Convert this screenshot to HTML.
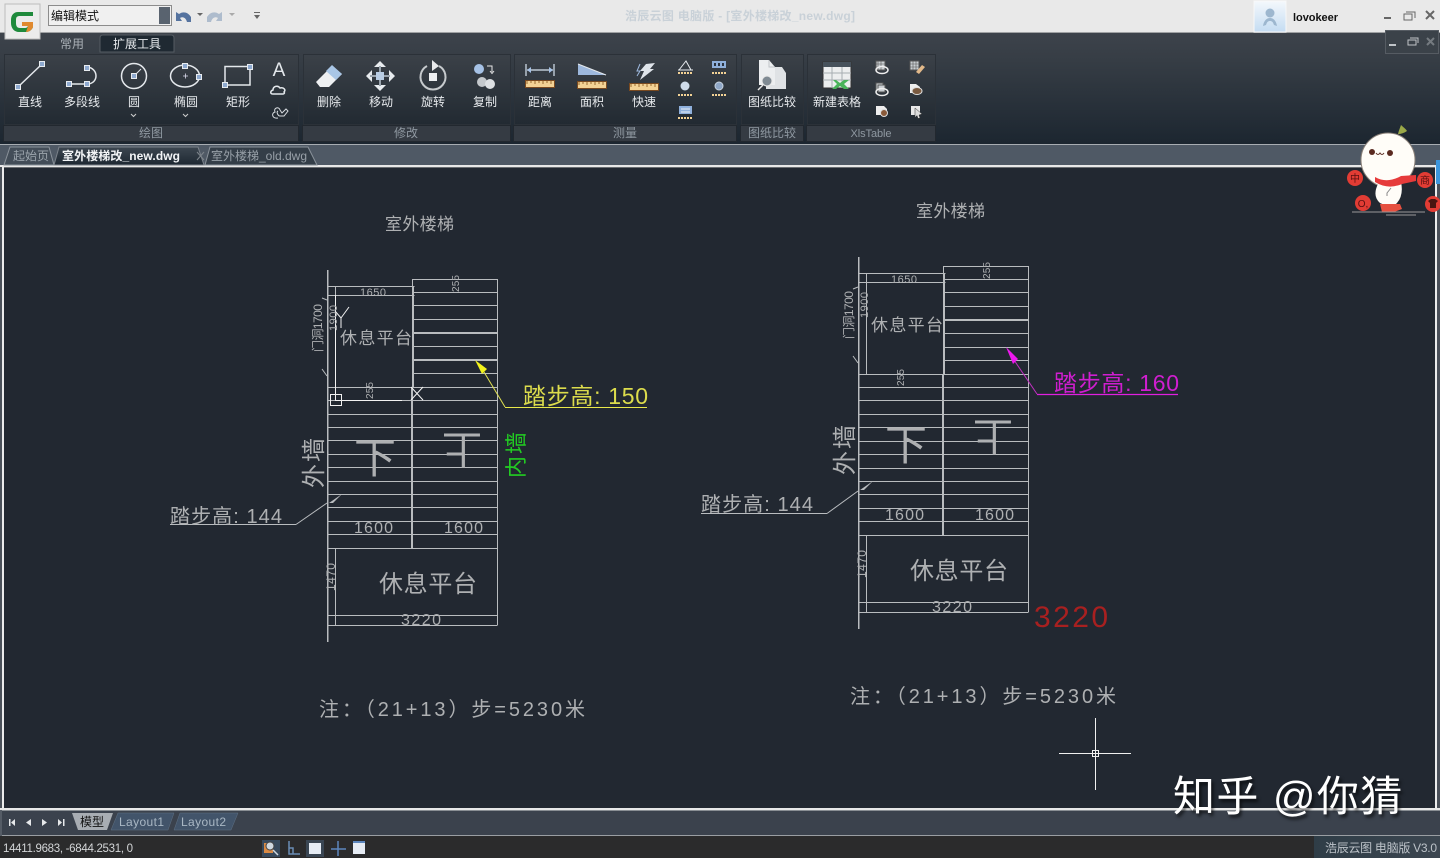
<!DOCTYPE html>
<html><head><meta charset="utf-8"><style>
html,body{margin:0;padding:0;width:1440px;height:858px;overflow:hidden;background:#222831}
svg{display:block;position:absolute;left:0;top:0}
text{font-family:"Liberation Sans","Noto Sans CJK SC",sans-serif}
.rl{font-size:12px;fill:#e6e9ec;text-anchor:middle}
.gl{font-size:12px;fill:#8f98a1;text-anchor:middle}
.d{fill:#aeb0b2;font-family:"Liberation Sans","Noto Sans CJK SC",sans-serif}
.wm{position:absolute;left:1173px;top:769px;font:42px/56px "Liberation Sans","Noto Sans CJK SC",sans-serif;color:#fff;text-shadow:2px 3px 3px rgba(0,0,0,.65);white-space:nowrap;letter-spacing:1.4px}
</style></head><body>
<svg width="1440" height="858" viewBox="0 0 1440 858" xmlns="http://www.w3.org/2000/svg">
<defs>
<linearGradient id="rib" x1="0" y1="0" x2="0" y2="1"><stop offset="0" stop-color="#3d434b"/><stop offset=".25" stop-color="#363d45"/><stop offset="1" stop-color="#1c2630"/></linearGradient>
<linearGradient id="grp" x1="0" y1="0" x2="0" y2="1"><stop offset="0" stop-color="#3b4148"/><stop offset="1" stop-color="#222a32"/></linearGradient>
<linearGradient id="usr" x1="0" y1="0" x2="0" y2="1"><stop offset="0" stop-color="#f4f8fc"/><stop offset="1" stop-color="#c4dcf2"/></linearGradient>
<linearGradient id="tabact" x1="0" y1="0" x2="0" y2="1"><stop offset="0" stop-color="#3c4650"/><stop offset="1" stop-color="#1e2832"/></linearGradient>
<linearGradient id="st" x1="0" y1="0" x2="1" y2="0"><stop offset="0" stop-color="#2f3d47"/><stop offset="1" stop-color="#3c4650"/></linearGradient>
</defs>

<!-- title bar -->
<rect width="1440" height="32" fill="#e9e9e9"/>
<rect y="32" width="1440" height="1" fill="#a0a2a4"/>
<!-- ribbon bg -->
<rect y="33" width="1440" height="111" fill="url(#rib)"/>
<rect y="144" width="1440" height="1" fill="#a8adb2"/>
<rect y="145" width="1440" height="20" fill="#4f5965"/>
<rect y="165" width="1440" height="2" fill="#e8e8e8"/>
<rect y="167" width="1440" height="1" fill="#6a6e72"/>

<!-- logo -->
<rect x="5" y="4" width="35" height="35" fill="#ececec" stroke="#bdbdbd"/>
<path d="M33 12H18c-4 0-7 3-7 8v3c0 5 3 9 8 9h7c3 0 6-2 7-5v-5H22v4h6c-1 2-2 2-4 2h-4c-3 0-4-2-4-5v-3c0-3 1-4 4-4h13z" fill="#1f8a3c"/>
<path d="M22 22h11v5c-1 3-4 5-7 5l2-6h-6z" fill="#e08a30"/>
<!-- combo -->
<rect x="48.500" y="5.500" width="123" height="20" fill="#f0f0f0" stroke="#8c8c8c"/>
<rect x="159" y="7" width="11" height="17" fill="#59636f"/>
<text x="51" y="20" font-size="12" fill="#111">编辑模式</text>
<!-- undo/redo -->
<path d="M176 12l3 2c4-3 9-2 12 3v5h-4c-1-4-4-6-7-4l2 3h-6z" fill="#55739f"/>
<path d="M197 13h6l-3 3z" fill="#666"/>
<path d="M222 12l-3 2c-4-3-9-2-12 3v5h4c1-4 4-6 7-4l-2 3h6z" fill="#aebccd"/>
<path d="M229 13h6l-3 3z" fill="#aaa"/>
<path d="M254 12h6v1h-6zM254 15h6l-3 4z" fill="#666"/>
<text x="625" y="20" font-size="12" font-weight="bold" fill="#c9d1d8" textLength="230">浩辰云图 电脑版 - [室外楼梯改_new.dwg]</text>
<!-- user -->
<rect x="1254" y="1" width="32" height="31" fill="url(#usr)" stroke="#f8f8f8"/>
<circle cx="1270" cy="13" r="4.500" fill="#9db7cf"/>
<path d="M1263 26c1-6 4-8 7-8s6 2 7 8l-3-1c-1-3-2-4-4-4s-3 1-4 4z" fill="#9db7cf"/>
<text x="1293" y="21" font-size="11" font-weight="bold" fill="#111" textLength="45">lovokeer</text>
<g stroke="#666" fill="none" stroke-width="1.500">
<path d="M1384 18h7" stroke-width="2"/>
<path d="M1406 12h9v6M1404 14h8v6h-8z" stroke-width="1"/>
<path d="M1426 11l8 8M1434 11l-8 8" stroke-width="2"/>
</g>
<!-- mdi controls -->
<rect x="1385.500" y="30.500" width="53" height="23" fill="#3b4249" stroke="#565c63"/>
<path d="M1389 45h7" stroke="#c0c4c8" stroke-width="2"/>
<g stroke="#c0c4c8" fill="none"><path d="M1410 38h8v5M1408 40h8v5h-8z"/></g>
<path d="M1427 38l7 7M1434 38l-7 7" stroke="#757b80" stroke-width="2"/>

<!-- ribbon tabs -->
<text x="72" y="48" class="gl" style="fill:#aab0b6">常用</text>
<path d="M100 52V38q0-3 3-3h68q3 0 3 3v14z" fill="#1f2932" stroke="#555c63"/>
<text x="137" y="48" class="rl">扩展工具</text>

<!-- ribbon groups -->
<g fill="url(#grp)" stroke="#2b3138">
<rect x="4.500" y="54.500" width="294" height="70"/>
<rect x="303.500" y="54.500" width="207" height="70"/>
<rect x="514.500" y="54.500" width="222" height="70"/>
<rect x="741.500" y="54.500" width="62" height="70"/>
<rect x="807.500" y="54.500" width="128" height="70"/>
</g>
<g fill="#353b43" stroke="#22282f">
<rect x="3.500" y="125.500" width="295" height="16"/>
<rect x="302.500" y="125.500" width="208" height="16"/>
<rect x="513.500" y="125.500" width="223" height="16"/>
<rect x="740.500" y="125.500" width="63" height="16"/>
<rect x="806.500" y="125.500" width="129" height="16"/>
</g>
<text x="151" y="137" class="gl">绘图</text>
<text x="406" y="137" class="gl">修改</text>
<text x="625" y="137" class="gl">测量</text>
<text x="772" y="137" class="gl">图纸比较</text>
<text x="871" y="137" class="gl" style="font-size:11px" textLength="41">XlsTable</text>

<!-- draw icons -->
<g stroke="#e4e8ec" fill="none" stroke-width="1.500">
<path d="M19 86L41 65"/>
<path d="M70 84H87M87 67c12 1 12 17 0 17"/>
<circle cx="134" cy="76" r="12.500"/><path d="M134 76l7-7" stroke-width="1"/>
<ellipse cx="185" cy="76" rx="14.500" ry="11"/>
<path d="M225 85V66.500H250V85H225" />
</g>
<g fill="#8ea9cf" stroke="#e8ecf0" stroke-width="1">
<rect x="15.500" y="84.500" width="5" height="5"/><rect x="39.500" y="61.500" width="5" height="5"/>
<rect x="66.500" y="81.500" width="5" height="5"/><rect x="84.500" y="81.500" width="5" height="5"/><rect x="84.500" y="65.500" width="5" height="5"/>
<rect x="131.500" y="73.500" width="5" height="5"/>
<rect x="182.500" y="63.500" width="5" height="5"/><rect x="196.500" y="74.500" width="5" height="5"/>
<rect x="222.500" y="82.500" width="5" height="5"/><rect x="247.500" y="64.500" width="5" height="5"/>
</g>
<path d="M183 76h5M185.500 73.500v5" stroke="#dde" stroke-width=".8"/>
<text x="279" y="76" font-size="19" fill="#e4e8ec" text-anchor="middle">A</text>
<path d="M273 94c-3 0-3-3 0-4 0-4 5-5 7-2 4-1 6 2 4 4 1 1 0 2-1 2z" fill="none" stroke="#e4e8ec" stroke-width="1.500"/>
<path d="M278 118c-6 1-7-5-3-6-2-4 4-6 5-2l2 3 4-4 2 2-4 5h-4c-2 0-4-4-2-5" fill="none" stroke="#d8dce0" stroke-width="1"/>
<text x="30" y="106" class="rl">直线</text>
<text x="82" y="106" class="rl">多段线</text>
<text x="134" y="106" class="rl">圆</text>
<text x="186" y="106" class="rl">椭圆</text>
<text x="238" y="106" class="rl">矩形</text>
<path d="M131 114l2.500 2.500L136 114M183 114l2.500 2.500L188 114" stroke="#ccc" fill="none"/>

<!-- modify icons -->
<path d="M316 82l16-16 10 8-13 13h-9z" fill="#eef0f2"/>
<path d="M332 65l10 9-6 6-10-9z" fill="#a9c6e6"/>
<g fill="#e8ecef">
<path d="M380 61l6 6h-12zM380 91l6-6h-12zM366 76l6-6v12zM395 76l-6-6v12z"/>
<path d="M379 66h2v20h-2zM370 75h20v2h-20z" fill="#9aa4ad"/>
</g>
<rect x="376" y="72" width="8" height="8" fill="#b9cde4"/>
<path d="M427 66a12.500 12.500 0 1 0 12 0" fill="none" stroke="#c6cacd" stroke-width="2"/>
<path d="M432 60l7 6-7 5z" fill="#e8eaec"/>
<rect x="429" y="73" width="8" height="8" fill="#eef0f2"/>
<circle cx="479" cy="69" r="5" fill="#a6c2e6"/>
<circle cx="482" cy="82" r="5" fill="#c4c8cc"/><circle cx="490" cy="84" r="5" fill="#dde0e3"/>
<path d="M487 66h5v6M490 71l2 2.500 2-2.500" stroke="#e8e8e8" fill="none"/>
<text x="329" y="106" class="rl">删除</text>
<text x="381" y="106" class="rl">移动</text>
<text x="433" y="106" class="rl">旋转</text>
<text x="485" y="106" class="rl">复制</text>

<!-- measure -->
<g fill="#f3d295" stroke="#7a4a20" stroke-width="1">
<rect x="525.500" y="80.500" width="29" height="7"/>
<rect x="577.500" y="81.500" width="29" height="7"/>
<rect x="629.500" y="83.500" width="29" height="7"/>
</g>
<path d="M527 81v3M531 81v2M535 81v3M539 81v2M543 81v3M547 81v2M551 81v3M579 82v3M583 82v2M587 82v3M591 82v2M595 82v3M599 82v2M603 82v3M631 84v3M635 84v2M639 84v3M643 84v2M647 84v3M651 84v2M655 84v3" stroke="#9a6a30" fill="none"/>
<path d="M526 64v12M554 64v12M527 70h26" stroke="#d8e4f0" fill="none" stroke-width="1.200"/>
<path d="M527 70l4-3v6zM553 70l-4-3v6z" fill="#a6c2e6"/>
<path d="M578 64v11h28z" fill="#9db8dd"/>
<path d="M578 64l28 11" stroke="#e4e8ec"/>
<path d="M646 64l9-1-5 6h4l-14 11 4-9h-4z" fill="#dfe4ea"/>
<path d="M640 64l-3 7h3l-3 5" stroke="#9db8dd" fill="none"/>
<!-- small measure -->
<g fill="none" stroke="#f3d295" stroke-width="2" stroke-dasharray="2 1">
<path d="M678 73h15M678 95h14M678 118h14M712 73h14M712 95h14"/>
</g>
<path d="M679 70l7-9 5 9z M678 70h15" fill="none" stroke="#e8ecf0"/>
<circle cx="685" cy="86" r="4.500" fill="#cfdbea"/>
<rect x="679" y="106" width="13" height="8" fill="#8fb0dc"/>
<path d="M681 109h9M681 112h9" stroke="#e8eef5"/>
<rect x="712" y="61" width="14" height="7" fill="#8fb0dc"/>
<path d="M714 63h2v3h-2zM718 63h2v3h-2zM722 63h2v3h-2z" fill="#2a3340"/>
<circle cx="719" cy="86" r="4" fill="#8fa7c7" stroke="#c9d4e0"/>
<text x="540" y="106" class="rl">距离</text>
<text x="592" y="106" class="rl">面积</text>
<text x="644" y="106" class="rl">快速</text>

<!-- compare -->
<path d="M775 67h7l4 6v16h-20v-5h9z" fill="#dfe2e5"/>
<path d="M759 60h10l6 7v18h-16z" fill="#eceef0"/>
<path d="M769 60v7h6" stroke="#c0c4c8" fill="none"/>
<circle cx="767" cy="81" r="5" fill="#7f8a93" stroke="#e8e8e8"/>
<path d="M763 85l-5 5" stroke="#e8e8e8" stroke-width="1.500"/>
<text x="772" y="106" class="rl">图纸比较</text>

<!-- table -->
<rect x="823" y="62" width="28" height="26" fill="#eceeef" stroke="#333"/>
<rect x="823" y="62" width="28" height="5" fill="#47525c"/>
<path d="M823 73h28M823 80h28M832 67v21M842 67v21" stroke="#a6adb2" fill="none"/>
<path d="M836 80l4 3 4-3h5l-5 4 5 5h-5l-4-3-4 3h-4l5-5-4-4z" fill="#49b35a"/>
<text x="837" y="106" class="rl">新建表格</text>
<!-- small table icons -->
<g>
<rect x="876" y="61" width="9" height="9" fill="#c9ced2" stroke="#555"/>
<path d="M878 61v9M881 61v9M876 64h9M876 67h9" stroke="#555" stroke-width=".6"/>
<ellipse cx="882" cy="70" rx="6" ry="3.500" fill="none" stroke="#eee" stroke-width="1.500"/>
<rect x="876" y="83" width="7" height="7" fill="#c9ced2" stroke="#555"/>
<rect x="878" y="85" width="7" height="7" fill="#c9ced2" stroke="#555"/>
<ellipse cx="882" cy="92" rx="6" ry="3.500" fill="none" stroke="#eee" stroke-width="1.500"/>
<path d="M876 106h8l3 3v6h-11z" fill="#eee"/><circle cx="884" cy="113" r="3.500" fill="#8a5a3a" stroke="#ddd"/>
<rect x="910" y="61" width="9" height="9" fill="#c9ced2" stroke="#555"/>
<path d="M913 61v9M916 61v9M910 64h9M910 67h9" stroke="#555" stroke-width=".6"/>
<path d="M916 72l6-7 3 2-6 7z" fill="#e2b98a"/>
<path d="M910 84h6l4 3v6h-10z" fill="#eee"/><ellipse cx="917" cy="91" rx="5" ry="3.500" fill="#7a5a40" stroke="#ddd"/>
<rect x="911" y="106" width="9" height="9" fill="#e8e8e8"/>
<path d="M915 108l7 6-3 1 1 3-2 .5-1-3-2 2z" fill="#ddd" stroke="#333" stroke-width=".5"/>
</g>

<!-- doc tabs -->
<path d="M4 165l6-18h39l5 18z" fill="#434d58" stroke="#8a929a"/>
<text x="13" y="160" font-size="12" fill="#9ba4ac" textLength="36">起始页</text>
<path d="M54 165l5-18h139l6 18z" fill="url(#tabact)" stroke="#7a8189"/>
<text x="62" y="160" font-size="12" font-weight="bold" fill="#f2f4f6" textLength="118">室外楼梯改_new.dwg</text>
<path d="M197 152l7 8M204 152l-7 8" stroke="#7e858c"/>
<path d="M205 165l5-18h98l9 18z" fill="#343e48" stroke="#8a929a"/>
<text x="211" y="160" font-size="12" fill="#98a0a8" textLength="96">室外楼梯_old.dwg</text>

<!-- canvas -->
<rect x="3" y="168" width="1434" height="640" fill="#222831"/>
<rect x="2" y="167" width="2" height="642" fill="#ececec"/>
<rect x="1435" y="167" width="2" height="642" fill="#ececec"/>
<rect x="1437" y="167" width="3" height="642" fill="#4a5059"/>
<rect x="0" y="167" width="2" height="642" fill="#4a5059"/>
<rect x="1436" y="160" width="4" height="24" fill="#3d97dd"/>

<!-- drawing lines -->
<g id="plan" stroke="#b9bcbf" stroke-width="1" fill="none" shape-rendering="crispEdges">
<path d="M327.500 270V642" stroke-width="1.500"/>
<path d="M327 286.500H414.500M327 295.500H414.500M335.500 286V387M413.500 286V387M412.500 279V548" />
<path d="M412 548V387" stroke-width="2"/>
<path d="M412 279.500H497.500M412 292.500H497.500M412 305.500H497.500M412 319.500H497.500M412 346.500H497.500M412 373.500H497.500"/>
<path d="M412 333H497.500M412 360H497.500" stroke-width="2"/>
<path d="M327 387.500H497.500M327 400.500H497.500M327 414.500H497.500M327 427.500H497.500M327 440.500H497.500M327 454.500H497.500M327 467.500H497.500M327 481.500H497.500M327 494.500H497.500M327 507.500H497.500M327 521.500H497.500M327 534.500H497.500M327 548.500H497.500"/>
<path d="M497.500 279V625M335.500 548V625M327 615.500H497.500M327 625.500H497.500"/>
</g>
<g stroke="#b9bcbf" fill="none">
<path d="M327 300l-5-2M327 376l-5-7"/>
<path d="M296 524.500L327 503"/>
<path d="M170 524.500H296"/>
</g>
<path d="M329 503l13-9-9 9z" fill="#b9bcbf"/>
<!-- right plan lines -->
<g stroke="#b9bcbf" stroke-width="1" fill="none" shape-rendering="crispEdges">
<path d="M858.500 257V629" stroke-width="1.500"/>
<path d="M858 273.500H945.500M858 282.500H945.500M866.500 273V374M944.500 273V374M943.500 266V535"/>
<path d="M943 535V374" stroke-width="2"/>
<path d="M943 266.500H1028.500M943 279.500H1028.500M943 292.500H1028.500M943 306.500H1028.500M943 333.500H1028.500M943 347.500H1028.500M943 360.500H1028.500"/>
<path d="M943 320H1028.500" stroke-width="2"/>
<path d="M858 374.500H1028.500M858 387.500H1028.500M858 400.500H1028.500M858 414.500H1028.500M858 427.500H1028.500M858 441.500H1028.500M858 454.500H1028.500M858 468.500H1028.500M858 481.500H1028.500M858 494.500H1028.500M858 508.500H1028.500M858 521.500H1028.500M858 535.500H1028.500"/>
<path d="M1028.500 266V612M866.500 535V612M858 602.500H1028.500M858 612.500H1028.500"/>
</g>
<g stroke="#b9bcbf" fill="none">
<path d="M858 287l-5 2M858 363l-5-7"/>
<path d="M827 513.500L858 491"/>
<path d="M701 513.500H827"/>
</g>
<path d="M860 490l13-9-9 9z" fill="#b9bcbf"/>

<!-- UCS white lines left -->
<g stroke="#f2f2f2" fill="none">
<path d="M335.500 295V400.500H402"/>
<path d="M335 311l6 7 8-11M341 318v10"/>
<rect x="330.500" y="394.500" width="11" height="11"/>
<path d="M411 387l12 13M423 387l-12 13"/>
</g>
<!-- yellow leader -->
<path d="M505 407.500H647" stroke="#e8e84a"/>
<path d="M505 407L484 372" stroke="#e0e050"/>
<path d="M475 360l12 9-5 5z" fill="#f2f21c"/>
<!-- magenta leader -->
<path d="M1037 394.500H1178" stroke="#e020e0" stroke-width="1.200"/>
<path d="M1037 394L1014 360" stroke="#c030c0"/>
<path d="M1006 347l12 12-5 5z" fill="#ee18ee"/>

<!-- drawing text left -->
<text class="d" x="385" y="230" font-size="17" textLength="69">室外楼梯</text>
<text class="d" x="360" y="296" font-size="11" textLength="26">1650</text>
<text class="d" font-size="10" transform="translate(459,292) rotate(-90)" textLength="17">255</text>
<text class="d" font-size="12" transform="translate(322,352) rotate(-90)" textLength="48">门洞1700</text>
<text class="d" font-size="11" transform="translate(337,331) rotate(-90)" textLength="26">1900</text>
<text class="d" x="340" y="344" font-size="17" textLength="72">休息平台</text>
<text class="d" font-size="10" transform="translate(373,399) rotate(-90)" textLength="17">255</text>
<text x="523" y="404" font-size="23" fill="#dcdc4c" textLength="125">踏步高: 150</text>
<text x="0" y="0" font-size="22" fill="#22cc22" transform="translate(524,478) rotate(-90)" textLength="46">内墙</text>
<text class="d" font-size="24" transform="translate(322,488) rotate(-90)" textLength="50">外墙</text>
<text class="d" x="354" y="473" font-size="42">下</text>
<text class="d" font-size="40" transform="translate(482,435) rotate(180)">上</text>
<text class="d" x="354" y="533" font-size="16" textLength="39">1600</text>
<text class="d" x="444" y="533" font-size="16" textLength="39">1600</text>
<text class="d" x="170" y="523" font-size="20" textLength="112">踏步高: 144</text>
<text class="d" x="379" y="592" font-size="24" textLength="98">休息平台</text>
<text class="d" font-size="12" transform="translate(335,591) rotate(-90)" textLength="28">1470</text>
<text class="d" x="401" y="625" font-size="16" textLength="40">3220</text>
<text class="d" x="319" y="716" font-size="20" textLength="266">注：（21+13）步=5230米</text>

<!-- drawing text right -->
<text class="d" x="916" y="217" font-size="17" textLength="69">室外楼梯</text>
<text class="d" x="891" y="283" font-size="11" textLength="26">1650</text>
<text class="d" font-size="10" transform="translate(990,279) rotate(-90)" textLength="17">255</text>
<text class="d" font-size="12" transform="translate(853,339) rotate(-90)" textLength="48">门洞1700</text>
<text class="d" font-size="11" transform="translate(868,318) rotate(-90)" textLength="26">1900</text>
<text class="d" x="871" y="331" font-size="17" textLength="72">休息平台</text>
<text class="d" font-size="10" transform="translate(904,386) rotate(-90)" textLength="17">255</text>
<text x="1054" y="391" font-size="23" fill="#d01ed0" textLength="125">踏步高: 160</text>
<text class="d" font-size="24" transform="translate(853,475) rotate(-90)" textLength="50">外墙</text>
<text class="d" x="885" y="460" font-size="42">下</text>
<text class="d" font-size="40" transform="translate(1013,422) rotate(180)">上</text>
<text class="d" x="885" y="520" font-size="16" textLength="39">1600</text>
<text class="d" x="975" y="520" font-size="16" textLength="39">1600</text>
<text class="d" x="701" y="511" font-size="20" textLength="112">踏步高: 144</text>
<text class="d" x="910" y="579" font-size="24" textLength="98">休息平台</text>
<text class="d" font-size="12" transform="translate(866,578) rotate(-90)" textLength="28">1470</text>
<text class="d" x="932" y="612" font-size="16" textLength="40">3220</text>
<text x="1034" y="627" font-size="30" fill="#a82020" textLength="74">3220</text>
<text class="d" x="850" y="703" font-size="20" textLength="266">注：（21+13）步=5230米</text>

<!-- crosshair -->
<path d="M1095.500 718V790M1059 753.500H1131" stroke="#f0f0f0"/>
<rect x="1092.500" y="750.500" width="6" height="6" fill="none" stroke="#f0f0f0"/>

<!-- mascot -->
<g>
<path d="M1398 134c1-4 2-6 3-9 2 2 5 4 6 6-3 2-6 3-9 3z" fill="#9aa848"/>
<circle cx="1388" cy="160" r="27" fill="#fffdf8" stroke="#8a8078" stroke-width="1"/>
<circle cx="1372" cy="152" r="3" fill="#5a2a20"/>
<circle cx="1390" cy="153" r="3" fill="#5a2a20"/>
<path d="M1376 153q2 3 4 0q2 3 4 0" stroke="#5a2a20" fill="none"/>
<path d="M1378 184q-6 12 2 19q8 4 16 1q8-8 5-22z" fill="#fffdf8"/>
<path d="M1375 177q12 7 26-1l15-1v6l-14 3q-14 6-27-2z" fill="#e63b3b"/>
<path d="M1391 188l-4 5v3" stroke="#888" fill="none"/>
<path d="M1380 204h20l2 5-8 3h-12z" fill="#e65040"/>
<path d="M1352 212h73M1386 215h30" stroke="#999"/>
<circle cx="1355" cy="178" r="8" fill="#e23c34"/>
<text x="1355" y="182" font-size="10" fill="#5a1010" text-anchor="middle">中</text>
<circle cx="1425" cy="180" r="8" fill="#e23c34"/>
<text x="1425" y="184" font-size="10" fill="#5a1010" text-anchor="middle">商</text>
<circle cx="1363" cy="203" r="8" fill="#e23c34"/>
<text x="1363" y="207" font-size="10" fill="#5a1010" text-anchor="middle">O,</text>
<circle cx="1433" cy="204" r="8" fill="#e23c34"/>
<path d="M1428 201l3-2h4l3 2-2 2v5h-6v-5z" fill="#4a1510"/>
</g>

<!-- bottom tab bar -->
<rect y="808" width="1440" height="2" fill="#e8e8e8"/>
<rect y="810" width="1440" height="1" fill="#8a8f94"/>
<rect y="811" width="1440" height="24" fill="#3b424d"/>
<rect y="835" width="1440" height="1" fill="#9a9ea3"/>
<rect x="0" y="810" width="2" height="26" fill="#555c66"/>
<g fill="#e6e8ea">
<path d="M9 819h1.500v7H9zM11 822.500l4-3.500v7zM26 822.500l5-3.500v7zM42 819l5 3.500-5 3.500zM58 819l4 3.500-4 3.500zM63 819h1.500v7H63z"/>
</g>
<path d="M72 813h41l-6 17H78z" fill="#a8adb3"/>
<text x="80" y="826" font-size="12" fill="#111" textLength="24">模型</text>
<path d="M118 813h56l-6 17h-57z" fill="#42546a" stroke="#5f7185" stroke-width=".5"/>
<text x="119" y="826" font-size="12" fill="#a9b7c4" textLength="45">Layout1</text>
<path d="M180 813h58l-7 17h-57z" fill="#42546a" stroke="#5f7185" stroke-width=".5"/>
<text x="181" y="826" font-size="12" fill="#a9b7c4" textLength="45">Layout2</text>

<!-- status bar -->
<rect y="836" width="1440" height="22" fill="#2b2b2c"/>
<text x="3" y="852" font-size="11.500" fill="#d4d6d8" textLength="130">14411.9683, -6844.2531, 0</text>
<rect x="262" y="840" width="18" height="17" fill="#37495c"/>
<rect x="264" y="843" width="9" height="10" fill="#d98a45"/>
<circle cx="270" cy="846" r="4" fill="#cfd8e0" stroke="#444"/>
<path d="M273 850l5 5" stroke="#cfd8e0" stroke-width="1.500"/>
<path d="M289 841v13h11M289 848h4v6" stroke="#6a8cb4" fill="none" stroke-width="1.500"/>
<rect x="306" y="840" width="18" height="17" fill="#3a4653"/>
<rect x="309" y="843" width="12" height="11" fill="#e6ecf4"/>
<path d="M338 841v15M331 849h15" stroke="#5c86bd" stroke-width="1.500"/>
<rect x="353" y="843" width="12" height="11" fill="#e6ecf4"/>
<rect x="353" y="841" width="12" height="2" fill="#5c86bd"/>
<rect x="1314" y="836" width="126" height="22" fill="url(#st)"/>
<text x="1325" y="852" font-size="12" fill="#bcc2c8" textLength="112">浩辰云图 电脑版 V3.0</text>
</svg>
<div class="wm">知乎 @你猜</div>
</body></html>
